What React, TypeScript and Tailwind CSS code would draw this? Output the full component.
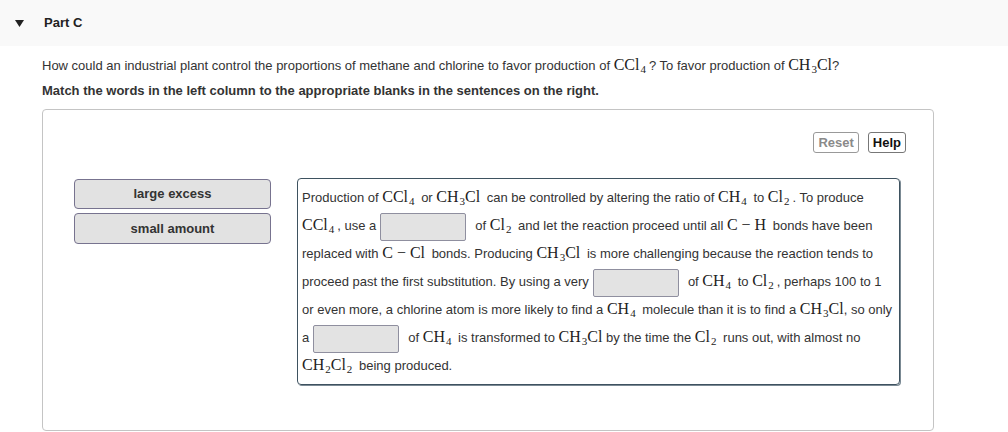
import React from "react";

const sans = { fontFamily: '"Liberation Sans", Arial, sans-serif' };

function M({ children, tight }: { children: React.ReactNode; tight?: boolean }) {
  return (
    <span
      className={
        tight
          ? "whitespace-nowrap text-[16px] [font-family:'Liberation_Serif',serif] text-[#222]"
          : "mr-[3px] whitespace-nowrap text-[16px] [font-family:'Liberation_Serif',serif] text-[#222]"
      }
    >
      {children}
    </span>
  );
}

function Sub({ children }: { children: React.ReactNode }) {
  return <span className="relative top-[3px] ml-[1px] text-[11px] leading-none">{children}</span>;
}

function Blank() {
  return (
    <span className="ml-[4px] mr-[9px] inline-block h-[28px] w-[86px] rounded-[2px] border border-[#8f8f9f] bg-[#e3e3e3] align-middle" />
  );
}

const CCl4 = () => (
  <M>
    CCl<Sub>4</Sub>
  </M>
);
const CH3Cl = ({ tight }: { tight?: boolean }) => (
  <M tight={tight}>
    CH<Sub>3</Sub>Cl
  </M>
);
const CH4 = () => (
  <M>
    CH<Sub>4</Sub>
  </M>
);
const Cl2 = () => (
  <M>
    Cl<Sub>2</Sub>
  </M>
);

function Line({ children }: { children: React.ReactNode }) {
  return <div className="h-[28px] whitespace-nowrap leading-[28px]">{children}</div>;
}

export default function App() {
  return (
    <div className="h-[432px] w-[1008px] overflow-hidden bg-white text-[13px] text-[#333]" style={sans}>
      <div className="flex h-[46px] items-center bg-[#f9f9f9] pl-[15px]">
        <svg width="9" height="7" viewBox="0 0 9 7" className="mt-[1px]">
          <path d="M0 0 H9 L4.5 7 Z" fill="#222" />
        </svg>
        <span className="ml-[20px] font-bold text-[#222]">Part C</span>
      </div>

      <div className="pl-[42px]">
        <p className="mt-[10px] leading-[18px]">
          How could an industrial plant control the proportions of methane and chlorine to favor production of{" "}
          <CCl4 />? To favor production of <CH3Cl tight />?
        </p>
        <p className="mt-[7px] font-bold leading-[18px] text-[#333]">
          Match the words in the left column to the appropriate blanks in the sentences on the right.
        </p>

        <div className="mt-[9px] h-[322px] w-[892px] rounded-[4px] border border-[#c4c4c4] pl-[31px] pr-[27px] pt-[22px]">
          <div className="flex justify-end gap-[9px]">
            <button className="h-[21px] rounded-[3px] border border-[#999] bg-white px-[4px] font-bold text-[#8a8a8a]">
              Reset
            </button>
            <button className="h-[21px] rounded-[3px] border border-[#777] bg-white px-[4px] font-bold text-[#111]">
              Help
            </button>
          </div>

          <div className="mt-[25px] flex gap-[26px]">
            <div className="flex w-[197px] flex-col gap-[4px] pt-[1px]">
              <div className="flex h-[30px] items-center justify-center rounded-[4px] border border-[#77738f] bg-[#e2e2e2] font-bold text-[#333]">
                large excess
              </div>
              <div className="flex h-[31px] items-center justify-center rounded-[4px] border border-[#77738f] bg-[#e2e2e2] font-bold text-[#333]">
                small amount
              </div>
            </div>

            <div className="w-[603px] rounded-[4px] border border-[#3e5260] px-[4px] pt-[4px] pb-[5px] shadow-[1px_1px_0_#7b8a94]">
              <Line>
                Production of <CCl4 /> or <CH3Cl /> can be controlled by altering the ratio of <CH4 /> to <Cl2 />. To
                produce
              </Line>
              <Line>
                <CCl4 />, use a<Blank />
                of <Cl2 /> and let the reaction proceed until all <M>C − H</M> bonds have been
              </Line>
              <Line>
                replaced with <M>C − Cl</M> bonds. Producing <CH3Cl /> is more challenging because the reaction tends to
              </Line>
              <Line>
                proceed past the first substitution. By using a very<Blank />
                of <CH4 /> to <Cl2 />, perhaps 100 to 1
              </Line>
              <Line>
                or even more, a chlorine atom is more likely to find a <CH4 /> molecule than it is to find a{" "}
                <CH3Cl tight />, so only
              </Line>
              <Line>
                a<Blank />
                of <CH4 /> is transformed to <CH3Cl tight /> by the time the <Cl2 /> runs out, with almost no
              </Line>
              <Line>
                <M>
                  CH<Sub>2</Sub>Cl<Sub>2</Sub>
                </M>{" "}
                being produced.
              </Line>
            </div>
          </div>
        </div>
      </div>
    </div>
  );
}
